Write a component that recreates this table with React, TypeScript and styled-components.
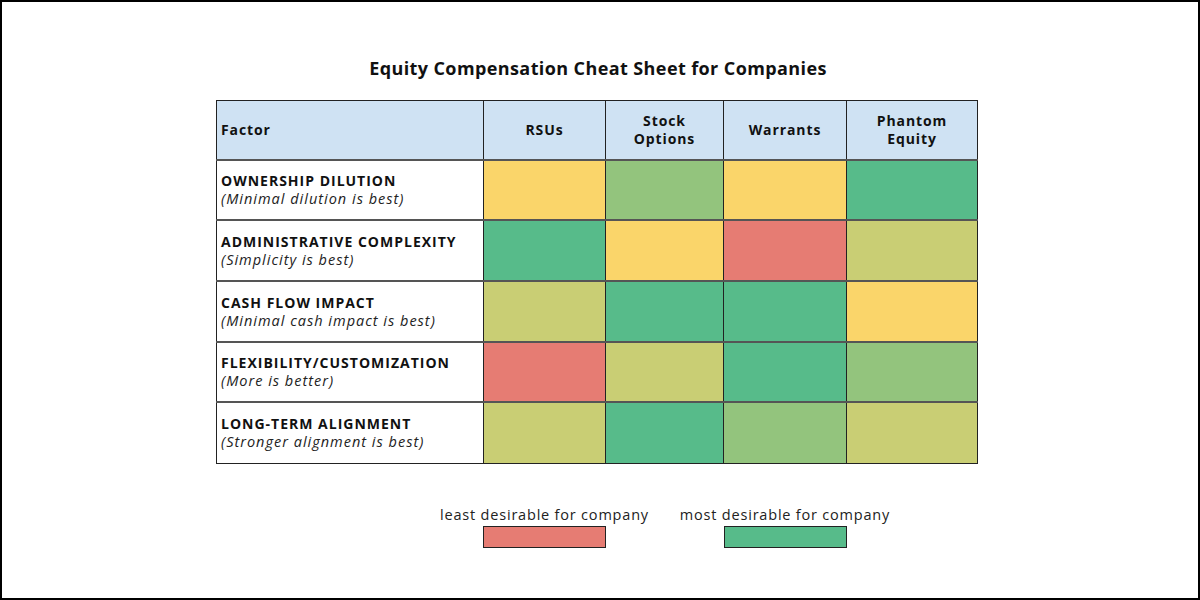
import styled, { createGlobalStyle } from "styled-components";

type Tone = "red" | "yellow" | "olive" | "lime" | "green";

const TONES: Record<Tone, string> = {
  red: "#e67c73",
  yellow: "#fad56a",
  olive: "#c9ce74",
  lime: "#93c47d",
  green: "#57bb8a",
};

const COLUMNS = ["RSUs", "Stock\nOptions", "Warrants", "Phantom\nEquity"];

type Row = {
  factor: string;
  hint: string;
  height: number;
  tones: Tone[];
};

const ROWS: Row[] = [
  {
    factor: "OWNERSHIP DILUTION",
    hint: "(Minimal dilution is best)",
    height: 60,
    tones: ["yellow", "lime", "yellow", "green"],
  },
  {
    factor: "ADMINISTRATIVE COMPLEXITY",
    hint: "(Simplicity is best)",
    height: 61,
    tones: ["green", "yellow", "red", "olive"],
  },
  {
    factor: "CASH FLOW IMPACT",
    hint: "(Minimal cash impact is best)",
    height: 61,
    tones: ["olive", "green", "green", "yellow"],
  },
  {
    factor: "FLEXIBILITY/CUSTOMIZATION",
    hint: "(More is better)",
    height: 60,
    tones: ["red", "olive", "green", "lime"],
  },
  {
    factor: "LONG-TERM ALIGNMENT",
    hint: "(Stronger alignment is best)",
    height: 61,
    tones: ["olive", "green", "lime", "olive"],
  },
];

export default function App() {
  return (
    <>
      <GlobalStyle />
      <Frame>
        <Title>Equity Compensation Cheat Sheet for Companies</Title>

        <Sheet>
          <colgroup>
            <col style={{ width: 267 }} />
            <col style={{ width: 122 }} />
            <col style={{ width: 118 }} />
            <col style={{ width: 123 }} />
            <col style={{ width: 131 }} />
          </colgroup>
          <thead>
            <tr>
              <HeadCell $left>Factor</HeadCell>
              {COLUMNS.map((c) => (
                <HeadCell key={c}>{c}</HeadCell>
              ))}
            </tr>
          </thead>
          <tbody>
            {ROWS.map((r) => (
              <tr key={r.factor} style={{ height: r.height }}>
                <FactorCell>
                  <FactorName>{r.factor}</FactorName>
                  <FactorHint>{r.hint}</FactorHint>
                </FactorCell>
                {r.tones.map((t, i) => (
                  <ToneCell key={i} $tone={t} />
                ))}
              </tr>
            ))}
          </tbody>
        </Sheet>

        <Legend>
          <LegendSpacer />
          <LegendItem>
            <LegendLabel>least desirable for company</LegendLabel>
            <Swatch $tone="red" />
          </LegendItem>
          <LegendSpacer />
          <LegendItem>
            <LegendLabel>most desirable for company</LegendLabel>
            <Swatch $tone="green" />
          </LegendItem>
        </Legend>
      </Frame>
    </>
  );
}

const GlobalStyle = createGlobalStyle`
  html, body {
    margin: 0;
    padding: 0;
    background: #fff;
  }
  body {
    font-family: "Open Sans", "Liberation Sans", sans-serif;
    color: #111;
  }
`;

const Frame = styled.div`
  box-sizing: border-box;
  width: 1200px;
  height: 600px;
  border: 2px solid #000;
  display: flex;
  flex-direction: column;
  align-items: center;
  padding-top: 55px;
`;

const Title = styled.h1`
  margin: 0 0 20px 0;
  font-size: 18px;
  line-height: 23px;
  font-weight: 700;
  color: #111;
  letter-spacing: 0.4px;
  transform: translateX(-2px);
`;

const Sheet = styled.table`
  border-collapse: collapse;
  table-layout: fixed;
  width: 761px;
  margin-left: -6px;
`;

const HeadCell = styled.th<{ $left?: boolean }>`
  height: 58px;
  padding: 0 4px;
  background: #cfe2f3;
  border: 1px solid #222;
  border-bottom: 2px solid #555;
  font-size: 14px;
  line-height: 18px;
  font-weight: 700;
  letter-spacing: 0.9px;
  white-space: pre-line;
  text-align: ${(p) => (p.$left ? "left" : "center")};
  vertical-align: middle;
`;

const FactorCell = styled.td`
  padding: 0 4px;
  border: 1px solid #222;
  border-top: 2px solid #555;
  vertical-align: middle;
  background: #fff;
`;

const FactorName = styled.div`
  font-size: 14px;
  line-height: 18px;
  font-weight: 700;
  white-space: nowrap;
  letter-spacing: 1px;
`;

const FactorHint = styled.div`
  font-size: 14.5px;
  line-height: 18px;
  font-style: italic;
  color: #222;
  white-space: nowrap;
  letter-spacing: 1px;
`;

const ToneCell = styled.td<{ $tone: Tone }>`
  border: 1px solid #222;
  border-top: 2px solid #555;
  background: ${(p) => TONES[p.$tone]};
`;

const Legend = styled.div`
  display: grid;
  grid-template-columns: 267px 122px 118px 123px 131px;
  width: 761px;
  margin-top: 41px;
  margin-left: -6px;
`;

const LegendSpacer = styled.div``;

const LegendItem = styled.div`
  display: flex;
  flex-direction: column;
  align-items: center;
  gap: 2px;
`;

const LegendLabel = styled.div`
  font-size: 14.5px;
  line-height: 19px;
  white-space: nowrap;
  letter-spacing: 0.8px;
  color: #222;
`;

const Swatch = styled.div<{ $tone: Tone }>`
  box-sizing: border-box;
  width: 123px;
  height: 22px;
  border: 1px solid #222;
  background: ${(p) => TONES[p.$tone]};
`;
